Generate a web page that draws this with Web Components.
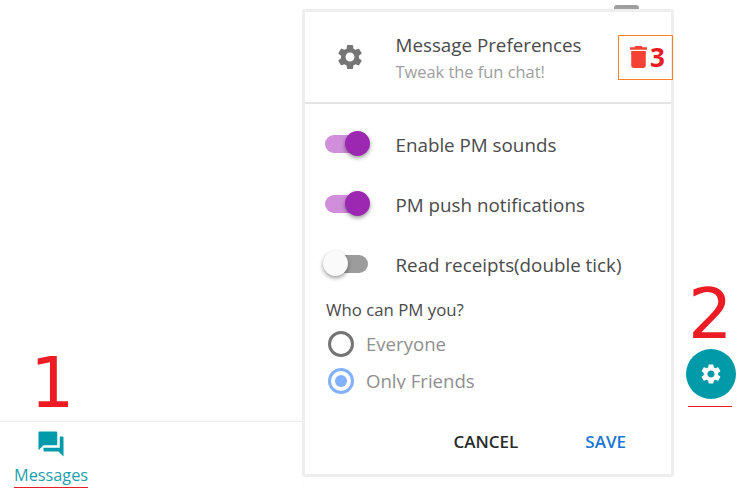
<!DOCTYPE html>
<html>
<head>
<meta charset="utf-8">
<style>
  html, body { margin: 0; height: 100%; background: #fff; }
  body { font-family: "Open Sans", "Noto Sans", sans-serif; overflow: hidden; }
</style>
</head>
<body>
<app-screen>
  <bottom-nav slot="nav"></bottom-nav>
  <big-mark slot="overlay" style="left:30px;top:348px">1</big-mark>
  <big-mark slot="overlay" style="left:688px;top:279px">2</big-mark>
  <settings-fab slot="overlay"></settings-fab>
  <prefs-panel slot="overlay"></prefs-panel>
</app-screen>

<script>
const GEAR = "M19.14 12.94c.04-.3.06-.61.06-.94 0-.32-.02-.64-.07-.94l2.03-1.58a.49.49 0 0 0 .12-.61l-1.92-3.32a.488.488 0 0 0-.59-.22l-2.39.96c-.5-.38-1.03-.7-1.62-.94l-.36-2.54a.484.484 0 0 0-.48-.41h-3.84c-.24 0-.43.17-.47.41l-.36 2.54c-.59.24-1.13.57-1.62.94l-2.39-.96c-.22-.08-.47 0-.59.22L2.74 8.87c-.12.21-.08.47.12.61l2.03 1.58c-.05.3-.09.63-.09.94s.02.64.07.94l-2.03 1.58a.49.49 0 0 0-.12.61l1.92 3.32c.12.22.37.29.59.22l2.39-.96c.5.38 1.03.7 1.62.94l.36 2.54c.05.24.24.41.48.41h3.84c.24 0 .44-.17.47-.41l.36-2.54c.59-.24 1.13-.56 1.62-.94l2.39.96c.22.08.47 0 .59-.22l1.92-3.32c.12-.22.07-.47-.12-.61l-2.01-1.58zM12 15.6c-1.98 0-3.6-1.62-3.6-3.6s1.62-3.6 3.6-3.6 3.6 1.62 3.6 3.6-1.62 3.6-3.6 3.6z";

class AppScreen extends HTMLElement {
  constructor() {
    super();
    this.attachShadow({ mode: "open" });
    this.shadowRoot.innerHTML = `
      <style>
        :host { display: flex; flex-direction: column; position: relative; width: 749px; height: 489px; }
        .content { flex: 1; }
      </style>
      <div class="content"></div>
      <slot name="nav"></slot>
      <slot name="overlay"></slot>`;
  }
}

class BottomNav extends HTMLElement {
  constructor() {
    super();
    this.attachShadow({ mode: "open" });
    this.shadowRoot.innerHTML = `
      <style>
        :host { display: flex; width: 303px; height: 67px; border-top: 1px solid #eee; box-shadow: 0 -2px 3px rgba(0,0,0,.03); }
        .item { display: flex; flex-direction: column; align-items: center; margin-left: 14px; color: #1a9fb0; font-size: 16.3px; }
        svg { display: block; width: 30px; height: 30px; margin-top: 7px; fill: #009aaa; }
        span { line-height: 22px; margin-top: 5px; border-bottom: 1px solid #ed1c24; height: 23px; }
      </style>
      <div class="item">
        <svg viewBox="0 0 24 24"><path d="M21 6h-2v9H6v2c0 .55.45 1 1 1h11l4 4V7c0-.55-.45-1-1-1zm-4 6V3c0-.55-.45-1-1-1H3c-.55 0-1 .45-1 1v14l4-4h10c.55 0 1-.45 1-1z"/></svg>
        <span>Messages</span>
      </div>`;
  }
}

class BigMark extends HTMLElement {
  constructor() {
    super();
    this.attachShadow({ mode: "open" });
    this.shadowRoot.innerHTML = `
      <style>
        :host { position: absolute; color: #ed1c24; font-family: "DejaVu Sans", sans-serif; font-size: 70px; line-height: 70px; }
      </style>
      <slot></slot>`;
  }
}

class SettingsFab extends HTMLElement {
  constructor() {
    super();
    this.attachShadow({ mode: "open" });
    this.shadowRoot.innerHTML = `
      <style>
        :host { position: absolute; left: 686px; top: 349px; width: 50px; height: 58px; }
        .circle { width: 50px; height: 50px; border-radius: 50%; background: #009aa8; display: flex; align-items: center; justify-content: center; }
        svg { width: 24px; height: 24px; fill: #fff; }
        .line { height: 1px; width: 44px; margin: 7px 0 0 2px; background: #ed1c24; }
      </style>
      <div class="circle"><svg viewBox="0 0 24 24"><path d="${GEAR}"/></svg></div>
      <div class="line"></div>`;
  }
}

class PmToggle extends HTMLElement {
  constructor() {
    super();
    this.attachShadow({ mode: "open" });
    const on = this.hasAttribute("on");
    this.shadowRoot.innerHTML = `
      <style>
        :host { display: flex; align-items: center; height: 60px; font-size: 18.8px; color: #4a4a4a; }
        .sw { position: relative; width: 43px; height: 18px; margin: -2px 27.5px 0 20px; border-radius: 9px; background: ${on ? "#d18fdb" : "#9c9c9c"}; }
        .knob { position: absolute; top: -4px; ${on ? "right: -2px" : "left: -2px"}; width: 25px; height: 25px; border-radius: 50%; background: ${on ? "#9c27b0" : "#fafafa"}; box-shadow: 0 2px 4px rgba(0,0,0,.4); }
      </style>
      <div class="sw"><div class="knob"></div></div>
      <slot></slot>`;
  }
}

class PmRadio extends HTMLElement {
  constructor() {
    super();
    this.attachShadow({ mode: "open" });
    const on = this.hasAttribute("on");
    this.shadowRoot.innerHTML = `
      <style>
        :host { display: flex; align-items: center; height: 37px; font-size: 18.6px; color: #8f8f8f; }
        .dot { box-sizing: border-box; width: 26px; height: 26px; margin: 0 12px 0 23px; border-radius: 50%; border: 3px solid ${on ? "#82b1ff" : "#757575"}; display: flex; align-items: center; justify-content: center; }
        .dot i { width: 12px; height: 12px; border-radius: 50%; background: #82b1ff; display: ${on ? "block" : "none"}; }
        .label { line-height: 16px; height: ${on ? 16 : 20}px; margin-top: ${on ? 0 : 4}px; overflow: hidden; }
      </style>
      <div class="dot"><i></i></div>
      <div class="label"><slot></slot></div>`;
  }
}

class PrefsPanel extends HTMLElement {
  constructor() {
    super();
    this.attachShadow({ mode: "open" });
    this.shadowRoot.innerHTML = `
      <style>
        :host { position: absolute; left: 302px; top: 9px; width: 372px; height: 468px; box-sizing: border-box; border: 3px solid #eee; border-radius: 3px; background: #fff; display: flex; flex-direction: column; }
        .tab { position: absolute; left: 309px; top: -7px; width: 25px; height: 4px; background: #9e9e9e; border-radius: 3px 3px 0 0; }
        header { display: flex; align-items: center; height: 90px; flex: none; border-bottom: 2px solid #e5e5e5; }
        .gear { width: 30px; height: 30px; margin: 0 30.5px 0 30px; fill: #757575; flex: none; }
        .titles { flex: 1; padding-top: 3px; }
        .title { font-size: 18.8px; line-height: 27px; color: #4a4a4a; }
        .sub { font-size: 16.4px; line-height: 26px; color: #9e9e9e; }
        .trash { box-sizing: border-box; width: 55px; height: 45px; margin: 0 -2px 0 0; border: 1px solid #ff7f27; display: flex; align-items: center; padding-left: 11px; color: #ed1c24; font-weight: 700; font-size: 26px; }
        .trash svg { width: 17px; height: 22px; fill: #f44336; flex: none; margin-right: 3px; }
        .list { padding-top: 11px; }
        .who { font-size: 16.8px; color: #4a4a4a; margin: 3px 0 3px 21px; line-height: 24px; }
        footer { display: flex; justify-content: flex-end; font-size: 17px; font-weight: 600; margin-top: 31px; }
        .cancel { color: #2b2b2b; margin-right: 67px; }
        .save { color: #1976d2; margin-right: 45px; }
      </style>
      <div class="tab"></div>
      <header>
        <svg class="gear" viewBox="0 0 24 24"><path d="${GEAR}"/></svg>
        <div class="titles">
          <div class="title">Message Preferences</div>
          <div class="sub">Tweak the fun chat!</div>
        </div>
        <div class="trash">
          <svg viewBox="5 3 14 18" preserveAspectRatio="none"><path d="M6 19c0 1.1.9 2 2 2h8c1.100 0 2-.9 2-2V7H6v12zM19 4h-3.500l-1-1h-5l-1 1H5v2h14V4z"/></svg>3
        </div>
      </header>
      <div class="list">
        <pm-toggle on>Enable PM sounds</pm-toggle>
        <pm-toggle on>PM push notifications</pm-toggle>
        <pm-toggle>Read receipts(double tick)</pm-toggle>
      </div>
      <div class="who">Who can PM you?</div>
      <pm-radio>Everyone</pm-radio>
      <pm-radio on>Only Friends</pm-radio>
      <footer><span class="cancel">CANCEL</span><span class="save">SAVE</span></footer>`;
  }
}

customElements.define("app-screen", AppScreen);
customElements.define("bottom-nav", BottomNav);
customElements.define("big-mark", BigMark);
customElements.define("settings-fab", SettingsFab);
customElements.define("pm-toggle", PmToggle);
customElements.define("pm-radio", PmRadio);
customElements.define("prefs-panel", PrefsPanel);
</script>
</body>
</html>
